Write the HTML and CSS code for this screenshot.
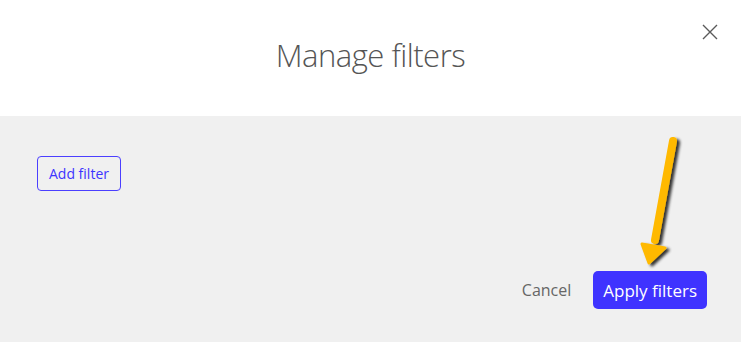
FILE: index.html
```html
<!DOCTYPE html>
<html>
<head>
<meta charset="utf-8">
<link rel="stylesheet" href="styles.css">
</head>
<body>
<div class="dialog">
  <header class="head">
    <h1 class="title">Manage filters</h1>
    <button class="close" aria-label="Close">
      <svg width="16" height="16" viewBox="0 0 16 16"><path d="M1 1L15 15M15 1L1 15" stroke="#5a5a5a" stroke-width="1.4" fill="none"/></svg>
    </button>
  </header>
  <section class="body">
    <div class="row">
      <button class="add">Add filter</button>
    </div>
    <div class="actions">
      <button class="cancel">Cancel</button>
      <button class="apply">Apply filters</button>
    </div>
    <svg class="arrow" width="60" height="150" viewBox="0 0 60 150">
      <defs>
        <filter id="sh" x="-50%" y="-50%" width="200%" height="200%">
          <feGaussianBlur in="SourceAlpha" stdDeviation="1.5"/>
          <feOffset dx="3" dy="2"/>
          <feComponentTransfer><feFuncA type="linear" slope="0.8"/></feComponentTransfer>
          <feMerge><feMergeNode/><feMergeNode in="SourceGraphic"/></feMerge>
        </filter>
      </defs>
      <g filter="url(#sh)">
        <path d="M45 13 L27 112" stroke="#ffb900" stroke-width="8" stroke-linecap="round" fill="none"/>
        <path d="M14 116 L21 135 L37 120 Z" fill="#ffb900" stroke="#ffb900" stroke-width="3" stroke-linejoin="round"/>
      </g>
    </svg>
  </section>
</div>
</body>
</html>
```
FILE: styles.css
```css
html, body {
  margin: 0;
  padding: 0;
  background: #ffffff;
  font-family: "Open Sans", "Noto Sans", sans-serif;
}
.dialog {
  width: 741px;
  height: 342px;
  display: flex;
  flex-direction: column;
}
.head {
  position: relative;
  height: 116px;
  background: #ffffff;
  display: flex;
  align-items: center;
  justify-content: center;
}
.title {
  margin: 0;
  margin-top: -6px;
  font-weight: 300;
  font-size: 31px;
  color: #555555;
  letter-spacing: -0.5px;
}
.close {
  position: absolute;
  top: 23px;
  right: 22px;
  width: 18px;
  height: 18px;
  padding: 0;
  border: 0;
  background: transparent;
  display: flex;
  align-items: center;
  justify-content: center;
}
.body {
  position: relative;
  flex: 1;
  background: #f0f0f0;
  display: flex;
  flex-direction: column;
  padding: 40px 34px 0 37px;
}
.row {
  display: flex;
}
.add {
  height: 35px;
  padding: 0 11px;
  border: 1px solid #4b3fff;
  border-radius: 4px;
  background: transparent;
  color: #3d34ff;
  font-family: inherit;
  font-size: 14px;
}
.actions {
  margin-top: 80px;
  display: flex;
  justify-content: flex-end;
  align-items: center;
  gap: 22px;
}
.cancel {
  border: 0;
  background: transparent;
  color: #666666;
  font-family: inherit;
  font-size: 16px;
  padding: 0;
}
.apply {
  height: 38px;
  padding: 0 10px;
  border: 0;
  border-radius: 5px;
  background: #3f33ff;
  color: #ffffff;
  font-family: inherit;
  font-size: 17px;
}
.arrow {
  position: absolute;
  left: 628px;
  top: 12px;
}
```
